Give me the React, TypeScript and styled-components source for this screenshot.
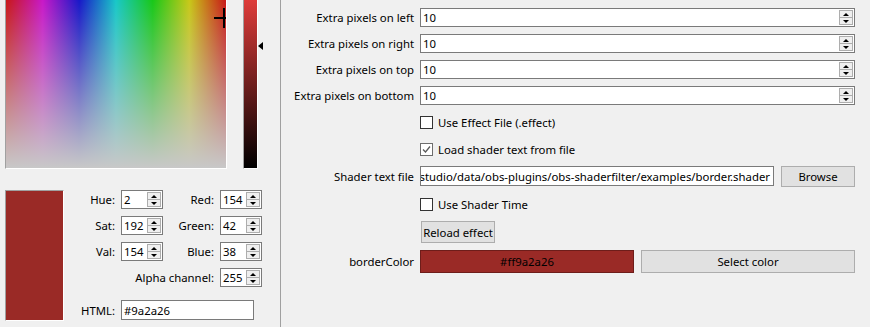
import React from 'react';
import styled, { createGlobalStyle } from 'styled-components';

const GlobalStyle = createGlobalStyle`
  html, body {
    margin: 0;
    padding: 0;
    background: #f0f0f0;
  }
  body {
    font-family: "Noto Sans", "Liberation Sans", sans-serif;
    font-size: 11.35px;
    color: #000;
  }
`;

// hue stops at value 200, like the Qt picker draws them
const HUE_STOPS = ['#c80000', '#c800c8', '#0000c8', '#00c8c8', '#00c800', '#c8c800', '#c80000'];

const Page = styled.div`
  display: flex;
  width: 870px;
  height: 327px;
  overflow: hidden;
  background: #f0f0f0;
`;

const LeftPanel = styled.div`
  width: 280px;
  flex-shrink: 0;
  padding-left: 5px;
  box-sizing: border-box;
  display: flex;
  flex-direction: column;
`;

const PickerRow = styled.div`
  display: flex;
  align-items: flex-start;
`;

const Spectrum = styled.div`
  position: relative;
  width: 220px;
  height: 168px;
  border-left: 1px solid #a0a0a0;
  border-right: 1px solid #fff;
  border-bottom: 1px solid #fff;
  overflow: hidden;
  background:
    linear-gradient(to bottom, rgba(200, 200, 200, 0.12), #c8c8c8),
    linear-gradient(to right, ${HUE_STOPS.join(', ')});
`;

const CrossH = styled.span`
  position: absolute;
  width: 20px;
  height: 2px;
  margin: -1px 0 0 -10px;
  background: #000;
`;

const CrossV = styled.span`
  position: absolute;
  width: 2px;
  height: 20px;
  margin: -10px 0 0 -1px;
  background: #000;
`;

const StripWrap = styled.div`
  position: relative;
  margin-left: 16px;
`;

const Strip = styled.div`
  width: 13px;
  height: 168px;
  border-left: 1px solid #a0a0a0;
  border-right: 1px solid #fff;
  border-bottom: 1px solid #fff;
  background: linear-gradient(to bottom, #de3c3a, #000);
`;

const Marker = styled.span`
  position: absolute;
  left: 100%;
  width: 0;
  height: 0;
  border-top: 4.5px solid transparent;
  border-bottom: 4.5px solid transparent;
  border-right: 5px solid #000;
`;

const ValuesRow = styled.div`
  display: flex;
  margin-top: 21px;
`;

const Swatch = styled.div<{ $color: string }>`
  width: 57px;
  height: 129px;
  border: 1px solid;
  border-color: #a0a0a0 #fff #fff #a0a0a0;
  background: ${(p) => p.$color};
`;

const ValuesGrid = styled.div`
  display: grid;
  grid-template-columns: 57px 42px 57px 42px;
  grid-template-rows: 19px 19px 19px 19px 26px;
  row-gap: 7px;
`;

const FieldLabel = styled.span<{ $span?: number; $bottom?: boolean }>`
  grid-column: ${(p) => (p.$span ? `span ${p.$span}` : 'auto')};
  ${(p) => (p.$bottom ? 'align-self: end; height: 20px;' : '')}
  display: flex;
  align-items: center;
  justify-content: flex-end;
  padding-right: 6px;
  white-space: nowrap;
`;

const SpinFrame = styled.div`
  display: flex;
  height: 19px;
  box-sizing: border-box;
  background: #fff;
  border: 1px solid #7a7a7a;
`;

const SpinText = styled.span`
  flex: 1;
  display: flex;
  align-items: center;
  padding-left: 2px;
  overflow: hidden;
`;

const SpinButtons = styled.div`
  display: flex;
  flex-direction: column;
  width: 14px;
  margin: 1px 1px 1px 0;
`;

const SpinButton = styled.div<{ $down?: boolean }>`
  flex: 1;
  display: flex;
  align-items: center;
  justify-content: center;
  box-sizing: border-box;
  background: #efefef;
  border: 1px solid #adadad;
  ${(p) => (p.$down ? 'border-top: none;' : '')}
`;

const Arrow = styled.span<{ $down?: boolean }>`
  width: 0;
  height: 0;
  border-left: 3px solid transparent;
  border-right: 3px solid transparent;
  ${(p) => (p.$down ? 'border-top: 3px solid #000;' : 'border-bottom: 3px solid #000;')}
`;

const LineEdit = styled.div<{ $width?: number; $right?: boolean }>`
  display: flex;
  align-items: center;
  justify-content: ${(p) => (p.$right ? 'flex-end' : 'flex-start')};
  width: ${(p) => (p.$width ? `${p.$width}px` : 'auto')};
  flex: ${(p) => (p.$width ? 'none' : '1')};
  min-width: 0;
  height: 20px;
  box-sizing: border-box;
  padding: 0 ${(p) => (p.$right ? '3px' : '0')} 0 2px;
  background: #fff;
  border: 1px solid #7a7a7a;
  white-space: nowrap;
  overflow: hidden;
`;

const HtmlEdit = styled(LineEdit)`
  grid-column: span 3;
  align-self: end;
`;

const Separator = styled.div`
  width: 1px;
  flex-shrink: 0;
  background: #a0a0a0;
`;

const RightPanel = styled.div`
  flex: 1;
  display: grid;
  grid-template-columns: 139px 1fr;
  grid-template-rows: 19px 19px 19px 19px 20px 20px 21px 20px 22px 23px;
  row-gap: 7px;
  align-content: start;
  padding: 8px 15px 0 0;
`;

const Field = styled.div`
  display: flex;
  align-items: stretch;
  gap: 7px;
  min-width: 0;
`;

const CheckRow = styled.label`
  grid-column: 2;
  display: flex;
  align-items: center;
  gap: 5px;
`;

const CheckBox = styled.span<{ $checked?: boolean }>`
  width: 13px;
  height: 13px;
  box-sizing: border-box;
  display: flex;
  align-items: center;
  justify-content: center;
  background: #fff;
  border: 1px solid ${(p) => (p.$checked ? '#6d6d6d' : '#333')};
`;

const PushButton = styled.div<{ $width?: number }>`
  display: flex;
  align-items: center;
  justify-content: center;
  width: ${(p) => (p.$width ? `${p.$width}px` : 'auto')};
  flex: ${(p) => (p.$width ? 'none' : '1')};
  box-sizing: border-box;
  background: #e1e1e1;
  border: 1px solid #adadad;
  white-space: nowrap;
`;

const ReloadButton = styled(PushButton)`
  grid-column: 2;
  justify-self: start;
  margin-left: 1px;
`;

const ColorButton = styled.div<{ $color: string }>`
  flex: 1;
  display: flex;
  align-items: center;
  justify-content: center;
  box-sizing: border-box;
  background: ${(p) => p.$color};
  border: 1px solid #6e1d1a;
`;

function SpinBox({ value }: { value: string }) {
  return (
    <SpinFrame>
      <SpinText>{value}</SpinText>
      <SpinButtons>
        <SpinButton>
          <Arrow />
        </SpinButton>
        <SpinButton $down>
          <Arrow $down />
        </SpinButton>
      </SpinButtons>
    </SpinFrame>
  );
}

function Check({ checked, label }: { checked?: boolean; label: string }) {
  return (
    <CheckRow>
      <CheckBox $checked={checked}>
        {checked && (
          <svg width="9" height="9" viewBox="0 0 9 9">
            <polyline points="1,4.5 3.5,7 8,1.5" fill="none" stroke="#5a5a5a" strokeWidth="1.3" />
          </svg>
        )}
      </CheckBox>
      {label}
    </CheckRow>
  );
}

const color = { hue: 2, sat: 192, val: 154, red: 154, green: 42, blue: 38, alpha: 255, html: '#9a2a26' };
const extraPixels = ['left', 'right', 'top', 'bottom'];

export default function App() {
  const crossX = Math.round(((360 - color.hue) / 360) * 219);
  const crossY = 18;

  return (
    <>
      <GlobalStyle />
      <Page>
        <LeftPanel>
          <PickerRow>
            <Spectrum>
              <CrossH style={{ left: crossX, top: crossY }} />
              <CrossV style={{ left: crossX, top: crossY }} />
            </Spectrum>
            <StripWrap>
              <Strip />
              <Marker style={{ top: 42 }} />
            </StripWrap>
          </PickerRow>

          <ValuesRow>
            <Swatch $color={color.html} />
            <ValuesGrid>
              <FieldLabel>Hue:</FieldLabel>
              <SpinBox value={String(color.hue)} />
              <FieldLabel>Red:</FieldLabel>
              <SpinBox value={String(color.red)} />

              <FieldLabel>Sat:</FieldLabel>
              <SpinBox value={String(color.sat)} />
              <FieldLabel>Green:</FieldLabel>
              <SpinBox value={String(color.green)} />

              <FieldLabel>Val:</FieldLabel>
              <SpinBox value={String(color.val)} />
              <FieldLabel>Blue:</FieldLabel>
              <SpinBox value={String(color.blue)} />

              <FieldLabel $span={3}>Alpha channel:</FieldLabel>
              <SpinBox value={String(color.alpha)} />

              <FieldLabel $bottom>HTML:</FieldLabel>
              <HtmlEdit $width={133}>{color.html}</HtmlEdit>
            </ValuesGrid>
          </ValuesRow>
        </LeftPanel>

        <Separator />

        <RightPanel>
          {extraPixels.map((side) => (
            <React.Fragment key={side}>
              <FieldLabel>Extra pixels on {side}</FieldLabel>
              <SpinBox value="10" />
            </React.Fragment>
          ))}

          <Check label="Use Effect File (.effect)" />
          <Check checked label="Load shader text from file" />

          <FieldLabel>Shader text file</FieldLabel>
          <Field>
            <LineEdit $right>studio/data/obs-plugins/obs-shaderfilter/examples/border.shader</LineEdit>
            <PushButton $width={74}>Browse</PushButton>
          </Field>

          <Check label="Use Shader Time" />

          <ReloadButton $width={74}>Reload effect</ReloadButton>

          <FieldLabel>borderColor</FieldLabel>
          <Field>
            <ColorButton $color={color.html}>#ff9a2a26</ColorButton>
            <PushButton>Select color</PushButton>
          </Field>
        </RightPanel>
      </Page>
    </>
  );
}
